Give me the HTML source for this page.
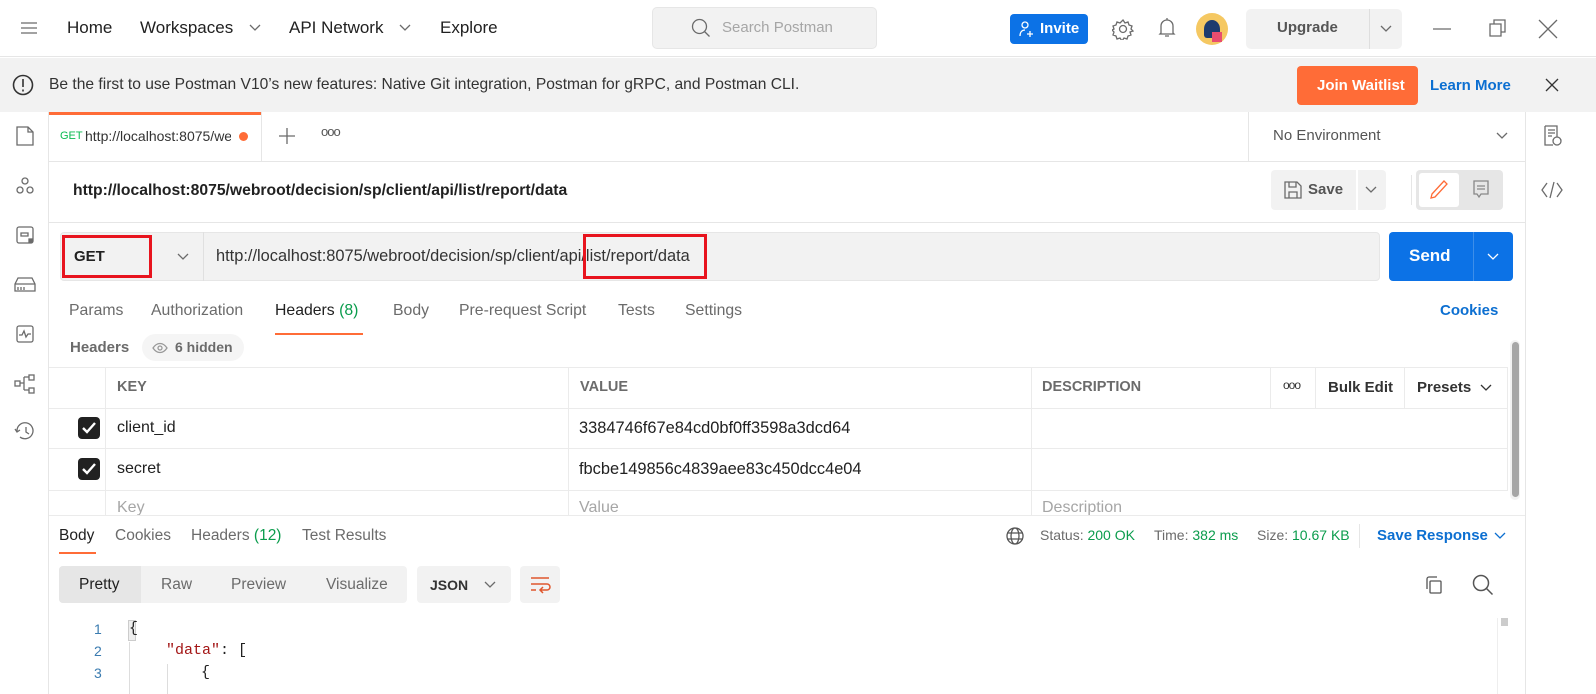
<!DOCTYPE html>
<html><head><meta charset="utf-8"><style>
*{box-sizing:border-box;margin:0;padding:0}
body{width:1596px;height:694px;overflow:hidden;background:#fff;font-family:"Liberation Sans",Arial,sans-serif;color:#212121;position:relative;font-size:14px}
.a{position:absolute}
.t{position:absolute;white-space:nowrap}
svg{position:absolute;fill:none;stroke:#6b6b6b;stroke-width:1.3}
</style></head><body>
<!-- top bar -->
<div class="a" style="left:0;top:0;width:1596px;height:57px;border-bottom:1px solid #e6e6e6"></div>
<svg style="left:20px;top:21px" width="18" height="14"><path d="M1 2h16M1 7h16M1 12h16"/></svg>
<div class="t" style="left:67px;top:18px;font-size:17px">Home</div>
<div class="t" style="left:140px;top:18px;font-size:17px">Workspaces</div>
<svg style="left:249px;top:24px" width="12" height="8"><path d="M1 1l5 5 5-5"/></svg>
<div class="t" style="left:289px;top:18px;font-size:17px">API Network</div>
<svg style="left:399px;top:24px" width="12" height="8"><path d="M1 1l5 5 5-5"/></svg>
<div class="t" style="left:440px;top:18px;font-size:17px">Explore</div>
<div class="a" style="left:652px;top:7px;width:225px;height:42px;background:#f2f2f2;border-radius:5px;border:1px solid #e6e6e6"></div>
<svg style="left:691px;top:18px" width="20" height="20"><circle cx="8.5" cy="8.5" r="7"/><path d="M13.5 13.5l5 5"/></svg>
<div class="t" style="left:722px;top:19px;font-size:15px;color:#a6a6a6">Search Postman</div>
<div class="a" style="left:1010px;top:14px;width:78px;height:30px;background:#0c72e6;border-radius:4px"></div>
<svg style="left:1018px;top:20px;stroke:#fff" width="18" height="18"><circle cx="7" cy="5" r="3"/><path d="M2 16c0-4 2-6 5-6M12 11v6M9 14h6"/></svg>
<div class="t" style="left:1040px;top:20px;font-size:15px;font-weight:bold;color:#fff">Invite</div>
<svg style="left:1112px;top:18px" width="22" height="22"><circle cx="11" cy="11" r="3.5"/><path d="M11 2l2 3 3-1 1 3 3 1-1 3 2 2-3 1 1 3-3 1-1 3-3-1-2 3-2-3-3 1-1-3-3-1 1-3-2-2 2-1-1-3 3-1 1-3 3 1z"/></svg>
<svg style="left:1157px;top:17px" width="20" height="22"><path d="M4 16V9a6 6 0 0 1 12 0v7l1 1H3zM8 19h4M10 1v2"/></svg>
<div class="a" style="left:1196px;top:13px;width:32px;height:32px;border-radius:50%;background:#f5c862"></div>
<div class="a" style="left:1204px;top:20px;width:16px;height:18px;border-radius:50% 50% 3px 3px;background:#1d3b6e"></div>
<div class="a" style="left:1212px;top:32px;width:10px;height:10px;background:#e84d6f"></div>
<div class="a" style="left:1246px;top:9px;width:156px;height:40px;background:#f2f2f2;border-radius:5px"></div>
<div class="a" style="left:1369px;top:9px;width:1px;height:40px;background:#dedede"></div>
<div class="t" style="left:1277px;top:19px;font-size:15px;font-weight:bold;color:#555">Upgrade</div>
<svg style="left:1380px;top:25px" width="12" height="8"><path d="M1 1l5 5 5-5"/></svg>
<svg style="left:1433px;top:28px" width="18" height="2"><path d="M0 1h18"/></svg>
<svg style="left:1489px;top:19px" width="18" height="18"><path d="M1 5h11v12H1zM5 5V1h11v12h-4"/></svg>
<svg style="left:1538px;top:19px" width="20" height="20"><path d="M1 1l18 18M19 1L1 19"/></svg>
<!-- banner -->
<div class="a" style="left:0;top:58px;width:1596px;height:54px;background:#f2f2f2"></div>
<svg style="left:12px;top:74px;stroke:#333;stroke-width:1.6" width="22" height="22"><circle cx="11" cy="11" r="9.5"/><path d="M11 5v8M11 15.5v2"/></svg>
<div class="t" style="left:49px;top:76px;font-size:15.6px;color:#333">Be the first to use Postman V10’s new features: Native Git integration, Postman for gRPC, and Postman CLI.</div>
<div class="a" style="left:1297px;top:66px;width:121px;height:39px;background:#ff6c37;border-radius:4px"></div>
<div class="t" style="left:1317px;top:77px;font-size:15px;font-weight:bold;color:#fff">Join Waitlist</div>
<div class="t" style="left:1430px;top:77px;font-size:15px;font-weight:bold;color:#0c6fd1">Learn More</div>
<svg style="left:1545px;top:78px;stroke:#333" width="14" height="14"><path d="M1 1l12 12M13 1L1 13"/></svg>
<!-- left sidebar -->
<div class="a" style="left:48px;top:112px;width:1px;height:582px;background:#e6e6e6"></div>
<svg style="left:15px;top:126px" width="20" height="20"><path d="M2 1h11l5 5v13H2z"/><path d="M13 1v5h5"/></svg>
<svg style="left:15px;top:176px" width="20" height="20"><circle cx="10" cy="5" r="3"/><circle cx="5" cy="14" r="3"/><circle cx="15" cy="14" r="3"/></svg>
<svg style="left:15px;top:225px" width="20" height="20"><rect x="2" y="2" width="16" height="16" rx="2"/><path d="M6 8h7v3H6z"/><rect x="14" y="14" width="3" height="3" fill="#6b6b6b"/></svg>
<svg style="left:14px;top:274px" width="22" height="20"><path d="M4 4h14l3 6v7H1v-7zM1 10h20M4 13v3M7 13v3M10 13v3"/></svg>
<svg style="left:15px;top:324px" width="20" height="20"><rect x="2" y="2" width="16" height="16" rx="2"/><path d="M4 11h3l2-4 2 6 2-3h3"/></svg>
<svg style="left:14px;top:373px" width="22" height="22"><rect x="1" y="8" width="5" height="5"/><rect x="15" y="2" width="5" height="5"/><rect x="15" y="15" width="5" height="5"/><path d="M6 10h4M10 4v13M10 4h5M10 17h5"/></svg>
<svg style="left:14px;top:422px" width="22" height="20"><path d="M3 9a8 8 0 1 1 3 6M1 7l2 3 3-2M12 5v5l3 2"/></svg>
<!-- right sidebar -->
<div class="a" style="left:1525px;top:112px;width:1px;height:582px;background:#e6e6e6"></div>
<svg style="left:1543px;top:125px" width="20" height="22"><path d="M2 1h12v11M2 1v19h8M5 5h7M5 8h7M5 11h4"/><circle cx="14" cy="16" r="4"/></svg>
<svg style="left:1541px;top:181px" width="22" height="18"><path d="M6 2L1 9l5 7M16 2l5 7-5 7M13 1L9 17"/></svg>
<!-- tabs row -->
<div class="a" style="left:49px;top:161px;width:1476px;height:1px;background:#e6e6e6"></div>
<div class="a" style="left:49px;top:112px;width:212px;height:3px;background:#ff6c37"></div>
<div class="a" style="left:261px;top:112px;width:1px;height:49px;background:#e6e6e6"></div>
<div class="t" style="left:60px;top:130px;font-size:11px;color:#0cbb52">GET</div>
<div class="t" style="left:85px;top:128px;font-size:14px;color:#333;width:146px;overflow:hidden">http://localhost:8075/webroot</div>
<div class="a" style="left:239px;top:132px;width:9px;height:9px;border-radius:50%;background:#ff6c37"></div>
<svg style="left:278px;top:127px" width="18" height="18"><path d="M9 1v16M1 9h16"/></svg>
<div class="t" style="left:321px;top:124px;font-size:13px;letter-spacing:-1px;color:#555">ooo</div>
<div class="a" style="left:1248px;top:112px;width:1px;height:49px;background:#e6e6e6"></div>
<div class="t" style="left:1273px;top:127px;font-size:15px;color:#555">No Environment</div>
<svg style="left:1496px;top:132px" width="12" height="8"><path d="M1 1l5 5 5-5"/></svg>
<!-- title row -->
<div class="t" style="left:73px;top:182px;font-size:15.7px;font-weight:bold;color:#212121">http://localhost:8075/webroot/decision/sp/client/api/list/report/data</div>
<div class="a" style="left:1271px;top:170px;width:115px;height:40px;background:#f2f2f2;border-radius:4px"></div>
<div class="a" style="left:1356px;top:170px;width:2px;height:40px;background:#fff"></div>
<svg style="left:1283px;top:180px" width="20" height="20"><path d="M2 2h12l4 4v12H2zM6 2v5h7V2M6 18v-6h8v6"/></svg>
<div class="t" style="left:1308px;top:181px;font-size:15px;font-weight:bold;color:#555">Save</div>
<svg style="left:1365px;top:186px" width="12" height="8"><path d="M1 1l5 5 5-5"/></svg>
<div class="a" style="left:1411px;top:175px;width:1px;height:30px;background:#e6e6e6"></div>
<div class="a" style="left:1416px;top:170px;width:87px;height:40px;background:#e6e6e6;border-radius:4px"></div>
<div class="a" style="left:1419px;top:173px;width:40px;height:34px;background:#fff;border-radius:3px"></div>
<svg style="left:1430px;top:180px;stroke:#ff6c37" width="18" height="20"><path d="M14 1l3 3L5 17l-4 1 1-4z"/></svg>
<svg style="left:1472px;top:180px;stroke:#888" width="18" height="20"><path d="M2 1h14v13h-7l-2 3-2-3H2zM5 6h8M5 9h8"/></svg>
<div class="a" style="left:49px;top:222px;width:1476px;height:1px;background:#e6e6e6"></div>
<!-- request row -->
<div class="a" style="left:60px;top:232px;width:1320px;height:49px;background:#f2f2f2;border:1px solid #e6e6e6;border-radius:4px"></div>
<div class="a" style="left:203px;top:232px;width:1px;height:49px;background:#e0e0e0"></div>
<div class="a" style="left:62px;top:235px;width:90px;height:43px;border:3px solid #e8141e"></div>
<div class="t" style="left:74px;top:248px;font-size:15px;font-weight:bold;color:#212121">GET</div>
<svg style="left:177px;top:253px" width="12" height="8"><path d="M1 1l5 5 5-5"/></svg>
<div class="t" style="left:216px;top:247px;font-size:16.4px;color:#333">http://localhost:8075/webroot/decision/sp/client/api/list/report/data</div>
<div class="a" style="left:583px;top:234px;width:124px;height:45px;border:3px solid #e8141e"></div>
<div class="a" style="left:1389px;top:232px;width:124px;height:49px;background:#0c72e6;border-radius:4px"></div>
<div class="a" style="left:1473px;top:232px;width:1px;height:49px;background:#3d8ee9"></div>
<div class="t" style="left:1409px;top:246px;font-size:17px;font-weight:bold;color:#fff">Send</div>
<svg style="left:1487px;top:253px;stroke:#fff" width="12" height="8"><path d="M1 1l5 5 5-5"/></svg>
<!-- request tabs -->
<div class="t" style="left:69px;top:302px;font-size:15.8px;color:#6b6b6b">Params</div>
<div class="t" style="left:151px;top:302px;font-size:15.8px;color:#6b6b6b">Authorization</div>
<div class="t" style="left:275px;top:302px;font-size:15.8px;color:#212121">Headers <span style="color:#0a9c4c">(8)</span></div>
<div class="a" style="left:275px;top:333px;width:88px;height:2px;background:#ff6c37"></div>
<div class="t" style="left:393px;top:302px;font-size:15.8px;color:#6b6b6b">Body</div>
<div class="t" style="left:459px;top:302px;font-size:15.8px;color:#6b6b6b">Pre-request Script</div>
<div class="t" style="left:618px;top:302px;font-size:15.8px;color:#6b6b6b">Tests</div>
<div class="t" style="left:685px;top:302px;font-size:15.8px;color:#6b6b6b">Settings</div>
<div class="t" style="left:1440px;top:302px;font-size:15px;font-weight:bold;color:#0c6fd1">Cookies</div>
<div class="t" style="left:70px;top:339px;font-size:15px;font-weight:bold;color:#6b6b6b">Headers</div>
<div class="a" style="left:142px;top:334px;width:102px;height:27px;background:#f5f5f5;border-radius:14px"></div>
<svg style="left:152px;top:342px;stroke:#999" width="16" height="12"><path d="M1 6c4-6 10-6 14 0-4 6-10 6-14 0z"/><circle cx="8" cy="6" r="2"/></svg>
<div class="t" style="left:175px;top:339px;font-size:14px;font-weight:bold;color:#6b6b6b">6 hidden</div>
<!-- table -->
<div class="a" style="left:49px;top:367px;width:1459px;height:1px;background:#ebebeb"></div>
<div class="a" style="left:49px;top:408px;width:1459px;height:1px;background:#ebebeb"></div>
<div class="a" style="left:49px;top:448px;width:1459px;height:1px;background:#ebebeb"></div>
<div class="a" style="left:49px;top:490px;width:1459px;height:1px;background:#ebebeb"></div>
<div class="a" style="left:105px;top:367px;width:1px;height:149px;background:#ebebeb"></div>
<div class="a" style="left:568px;top:367px;width:1px;height:149px;background:#ebebeb"></div>
<div class="a" style="left:1031px;top:367px;width:1px;height:149px;background:#ebebeb"></div>
<div class="a" style="left:1270px;top:367px;width:1px;height:41px;background:#ebebeb"></div>
<div class="a" style="left:1315px;top:367px;width:1px;height:41px;background:#ebebeb"></div>
<div class="a" style="left:1404px;top:367px;width:1px;height:41px;background:#ebebeb"></div>
<div class="a" style="left:1507px;top:367px;width:1px;height:124px;background:#ebebeb"></div>
<div class="t" style="left:117px;top:379px;font-size:14.5px;font-weight:bold;color:#6b6b6b">KEY</div>
<div class="t" style="left:580px;top:379px;font-size:14.5px;font-weight:bold;color:#6b6b6b">VALUE</div>
<div class="t" style="left:1042px;top:379px;font-size:14.5px;font-weight:bold;color:#6b6b6b">DESCRIPTION</div>
<div class="t" style="left:1283px;top:378px;font-size:12px;letter-spacing:-1px;color:#333">ooo</div>
<div class="t" style="left:1328px;top:379px;font-size:15px;font-weight:bold;color:#333">Bulk Edit</div>
<div class="t" style="left:1417px;top:379px;font-size:15px;font-weight:bold;color:#333">Presets</div>
<svg style="left:1480px;top:384px;stroke:#333" width="12" height="8"><path d="M1 1l5 5 5-5"/></svg>
<div class="a" style="left:78px;top:417px;width:22px;height:22px;background:#212121;border-radius:4px"></div>
<svg style="left:81px;top:421px;stroke:#fff;stroke-width:2.4" width="16" height="14"><path d="M2 7l4 4 8-9"/></svg>
<div class="a" style="left:78px;top:458px;width:22px;height:22px;background:#212121;border-radius:4px"></div>
<svg style="left:81px;top:462px;stroke:#fff;stroke-width:2.4" width="16" height="14"><path d="M2 7l4 4 8-9"/></svg>
<div class="t" style="left:117px;top:419px;font-size:16px;color:#212121">client_id</div>
<div class="t" style="left:579px;top:419px;font-size:16.4px;color:#212121">3384746f67e84cd0bf0ff3598a3dcd64</div>
<div class="t" style="left:117px;top:460px;font-size:16px;color:#212121">secret</div>
<div class="t" style="left:579px;top:460px;font-size:16.4px;color:#212121">fbcbe149856c4839aee83c450dcc4e04</div>
<div class="t" style="left:117px;top:499px;font-size:16px;color:#a6a6a6">Key</div>
<div class="t" style="left:579px;top:499px;font-size:16px;color:#a6a6a6">Value</div>
<div class="t" style="left:1042px;top:499px;font-size:16px;color:#a6a6a6">Description</div>
<div class="a" style="left:1510px;top:340px;width:10px;height:160px;background:#f2f2f2;border-radius:5px"></div>
<div class="a" style="left:1512px;top:342px;width:7px;height:155px;background:#a6a6a6;border-radius:4px"></div>
<div class="a" style="left:49px;top:515px;width:1476px;height:1px;background:#ebebeb"></div>
<!-- response -->
<div class="t" style="left:59px;top:527px;font-size:15.5px;color:#212121">Body</div>
<div class="a" style="left:59px;top:552px;width:37px;height:2px;background:#ff6c37"></div>
<div class="t" style="left:115px;top:527px;font-size:15.5px;color:#6b6b6b">Cookies</div>
<div class="t" style="left:191px;top:527px;font-size:15.5px;color:#6b6b6b">Headers <span style="color:#0a9c4c">(12)</span></div>
<div class="t" style="left:302px;top:527px;font-size:15.5px;color:#6b6b6b">Test Results</div>
<svg style="left:1005px;top:526px;stroke:#555" width="20" height="20"><circle cx="10" cy="10" r="8"/><ellipse cx="10" cy="10" rx="4" ry="8"/><path d="M2 7h16M2 13h16"/></svg>
<div class="t" style="left:1040px;top:527px;font-size:14px;color:#6b6b6b">Status: <span style="color:#0a9c4c">200 OK</span></div>
<div class="t" style="left:1154px;top:527px;font-size:14px;color:#6b6b6b">Time: <span style="color:#0a9c4c">382 ms</span></div>
<div class="t" style="left:1257px;top:527px;font-size:14px;color:#6b6b6b">Size: <span style="color:#0a9c4c">10.67 KB</span></div>
<div class="a" style="left:1359px;top:524px;width:1px;height:24px;background:#e6e6e6"></div>
<div class="t" style="left:1377px;top:527px;font-size:15px;font-weight:bold;color:#0c6fd1">Save Response</div>
<svg style="left:1494px;top:532px;stroke:#0c6fd1" width="12" height="8"><path d="M1 1l5 5 5-5"/></svg>
<div class="a" style="left:59px;top:566px;width:348px;height:37px;background:#f2f2f2;border-radius:4px"></div>
<div class="a" style="left:59px;top:566px;width:82px;height:37px;background:#e6e6e6;border-radius:4px 0 0 4px"></div>
<div class="t" style="left:79px;top:576px;font-size:15.5px;color:#212121">Pretty</div>
<div class="t" style="left:161px;top:576px;font-size:15.5px;color:#6b6b6b">Raw</div>
<div class="t" style="left:231px;top:576px;font-size:15.5px;color:#6b6b6b">Preview</div>
<div class="t" style="left:326px;top:576px;font-size:15.5px;color:#6b6b6b">Visualize</div>
<div class="a" style="left:417px;top:566px;width:94px;height:37px;background:#f2f2f2;border-radius:4px"></div>
<div class="t" style="left:430px;top:577px;font-size:14px;font-weight:bold;color:#333">JSON</div>
<svg style="left:484px;top:581px" width="12" height="8"><path d="M1 1l5 5 5-5"/></svg>
<div class="a" style="left:520px;top:566px;width:40px;height:37px;background:#f2f2f2;border-radius:4px"></div>
<svg style="left:530px;top:576px;stroke:#e0562c;stroke-width:1.5" width="22" height="18"><path d="M1 2h18M1 8h16a3 3 0 0 1 0 6h-6M13 11l-3 3 3 3M1 14h5"/></svg>
<svg style="left:1424px;top:575px;stroke:#555" width="20" height="20"><rect x="6" y="6" width="11" height="12" rx="1"/><path d="M3 14V4a2 2 0 0 1 2-2h8"/></svg>
<svg style="left:1472px;top:574px;stroke:#555;stroke-width:1.5" width="22" height="22"><circle cx="9" cy="9" r="7.5"/><path d="M14.5 14.5l6 6"/></svg>
<!-- code -->
<div class="t" style="left:94px;top:621px;font-size:14px;color:#3a7bb0">1</div>
<div class="t" style="left:94px;top:643px;font-size:14px;color:#3a7bb0">2</div>
<div class="t" style="left:94px;top:665px;font-size:14px;color:#3a7bb0">3</div>
<div class="a" style="left:128px;top:620px;width:8px;height:21px;background:#eee;border:1px solid #ccc"></div>
<div class="t" style="left:129px;top:620px;font-size:15px;font-family:'Liberation Mono',monospace;color:#212121">{</div>
<div class="a" style="left:129px;top:642px;width:1px;height:52px;background:#ddd"></div>
<div class="t" style="left:166px;top:642px;font-size:15px;font-family:'Liberation Mono',monospace;color:#212121"><span style="color:#a31515">"data"</span>: [</div>
<div class="a" style="left:167px;top:664px;width:1px;height:30px;background:#ddd"></div>
<div class="t" style="left:201px;top:664px;font-size:15px;font-family:'Liberation Mono',monospace;color:#212121">{</div>
<div class="a" style="left:1501px;top:618px;width:7px;height:8px;background:#ccc"></div>
<div class="a" style="left:1497px;top:618px;width:1px;height:76px;background:#eee"></div>
</body></html>
